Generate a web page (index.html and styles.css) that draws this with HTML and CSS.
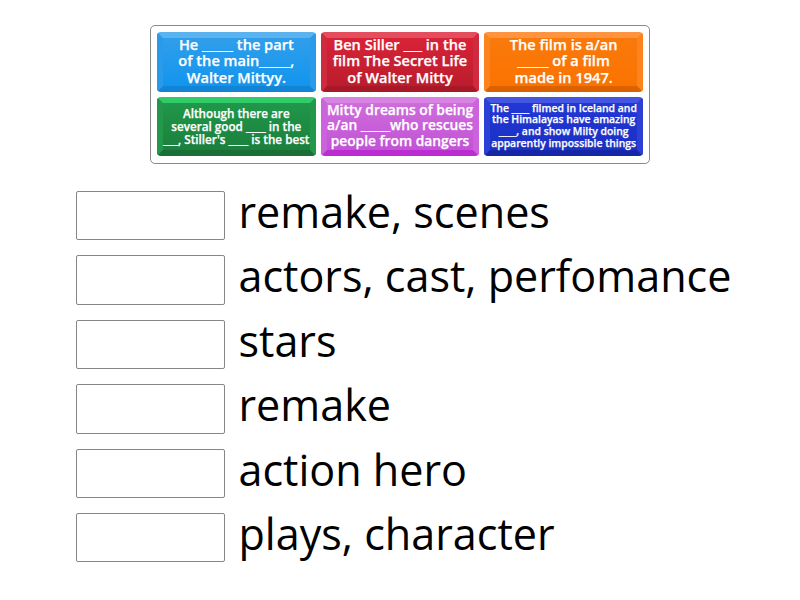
FILE: index.html
```
<!DOCTYPE html>
<html lang="en">
<head>
    <meta charset="UTF-8">
    <meta name="viewport" content="width=device-width, initial-scale=1.0">
    <title>Match up</title>
    <link rel="stylesheet" href="styles.css">
</head>
<body>
    <div class="tiles">
        <div class="tile blue">He _____ the part<br>of the main_____,<br>Walter Mittyy.</div>
        <div class="tile red">Ben Siller ___ in the<br>film The Secret Life<br>of Walter Mitty</div>
        <div class="tile orange">The film is a/an<br>_____ of a film<br>made in 1947.</div>
        <div class="tile green">Although there are<br>several good ____ in the<br>___, Stiller's ____ is the best</div>
        <div class="tile pink">Mitty dreams of being<br>a/an _____who rescues<br>people from dangers</div>
        <div class="tile navy">The ____ filmed in Iceland and<br>the Himalayas have amazing<br>____, and show Milty doing<br>apparently impossible things</div>
    </div>

    <div class="answers">
        <div class="row"><div class="drop"></div><span class="word">remake, scenes</span></div>
        <div class="row"><div class="drop"></div><span class="word">actors, cast, perfomance</span></div>
        <div class="row"><div class="drop"></div><span class="word">stars</span></div>
        <div class="row"><div class="drop"></div><span class="word">remake</span></div>
        <div class="row"><div class="drop"></div><span class="word">action hero</span></div>
        <div class="row"><div class="drop"></div><span class="word">plays, character</span></div>
    </div>
</body>
</html>
```
FILE: styles.css
```
* {
    box-sizing: border-box;
}

body {
    margin: 0;
    padding-top: 25px;
    height: 600px;
    overflow: hidden;
    background: #fff;
    font-family: "Open Sans", "Noto Sans", sans-serif;
}

.tiles {
    display: grid;
    grid-template-columns: repeat(3, minmax(0, 1fr));
    grid-template-rows: 60px 59px;
    gap: 5px;
    width: 500px;
    height: 139px;
    margin: 0 auto;
    padding: 6px;
    border: 1px solid #8a8a8a;
    border-radius: 5px;
}

.tile {
    display: grid;
    align-content: center;
    justify-content: center;
    padding-bottom: 3px;
    border: 6px solid;
    border-radius: 4px;
    background-origin: border-box;
    color: #fff;
    font-size: 14.6px;
    font-weight: 600;
    line-height: 16.4px;
    text-align: center;
    white-space: nowrap;
    -webkit-text-stroke: 0.25px #fff;
}

.blue {
    background-image: linear-gradient(#349fea, #0f94ee);
    border-color: #5ab2ef #2a9aea #1184d6 #2a9aea;
}

.red {
    background-image: linear-gradient(#dc2338, #b81c2d);
    border-color: #e34d5e #cf2a3d #a81827 #cf2a3d;
}

.orange {
    background-image: linear-gradient(#f97a0c, #fb7300);
    border-color: #ff9440 #fb841f #dc6200 #fb841f;
}

.green {
    padding-bottom: 1px;
    background-image: linear-gradient(#219a4b, #1b7c3c);
    border-color: #30cc69 #23984b #196f36 #23984b;
    font-size: 11.7px;
    line-height: 13px;
}

.pink {
    background-image: linear-gradient(#d070dc, #c14fd6);
    border-color: #d883e2 #cc62dc #bb2dd0 #cc62dc;
    font-size: 13.8px;
    line-height: 15.4px;
}

.navy {
    padding-bottom: 1px;
    background-image: linear-gradient(#2238d8, #1b2fc0);
    border-color: #4455e2 #2c40d6 #1526a8 #2c40d6;
    font-size: 10.4px;
    line-height: 11.7px;
}

.answers {
    display: grid;
    grid-auto-rows: 64.4px;
    margin: 27px 0 0 76px;
}

.row {
    display: flex;
    align-items: flex-start;
    gap: 13.5px;
}

.drop {
    width: 149px;
    height: 49.4px;
    border: 1px solid #868686;
    border-radius: 2px;
}

.word {
    color: #000;
    font-size: 43.1px;
    line-height: 41px;
    white-space: nowrap;
}
```
